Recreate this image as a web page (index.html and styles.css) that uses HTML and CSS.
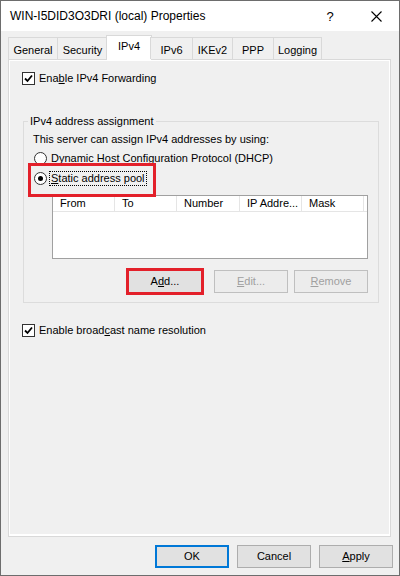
FILE: index.html
```html
<!DOCTYPE html>
<html>
<head>
<meta charset="utf-8">
<link rel="stylesheet" href="styles.css">
</head>
<body>
<div class="window">
  <div class="titlebar">
    <span class="title">WIN-I5DID3O3DRI (local) Properties</span>
    <span class="help">?</span>
    <span class="close"><svg width="11" height="11" viewBox="0 0 11 11"><path d="M0.5 0.5 L10.5 10.5 M10.5 0.5 L0.5 10.5" stroke="#000" stroke-width="1.1" fill="none"/></svg></span>
  </div>
  <div class="client">
    <div class="tabs">
      <div class="tab">General</div>
      <div class="tab">Security</div>
      <div class="tab selected">IPv4</div>
      <div class="tab">IPv6</div>
      <div class="tab">IKEv2</div>
      <div class="tab">PPP</div>
      <div class="tab">Logging</div>
    </div>
    <div class="panel">
      <div class="page">
        <div class="check first">
          <span class="box"><svg width="9" height="9" viewBox="0 0 9 9"><path d="M1 4.5 L3.5 7 L8 1.5" stroke="#000" stroke-width="1.8" fill="none"/></svg></span>
          <span>Ena<u>b</u>le IPv4 Forwarding</span>
        </div>
        <fieldset class="group">
          <legend>IPv4 address assignment</legend>
          <div class="intro">This server can assign IPv4 addresses by using:</div>
          <div class="radio dhcp">
            <span class="circle"></span>
            <span class="rlabel"><u>D</u>ynamic Host Configuration Protocol (DHCP)</span>
          </div>
          <div class="radio static">
            <span class="circle on"><span class="dot"></span></span>
            <span class="rlabel focus"><u>S</u>tatic address pool</span>
          </div>
          <div class="list">
            <div class="lhead">
              <span class="col">From</span>
              <span class="col">To</span>
              <span class="col">Number</span>
              <span class="col">IP Addre...</span>
              <span class="col">Mask</span>
            </div>
          </div>
          <div class="actions">
            <button class="btn add">A<u>d</u>d...</button>
            <button class="btn disabled"><u>E</u>dit...</button>
            <button class="btn disabled"><u>R</u>emove</button>
          </div>
        </fieldset>
        <div class="check second">
          <span class="box"><svg width="9" height="9" viewBox="0 0 9 9"><path d="M1 4.5 L3.5 7 L8 1.5" stroke="#000" stroke-width="1.8" fill="none"/></svg></span>
          <span>Enable broad<u>c</u>ast name resolution</span>
        </div>
      </div>
    </div>
    <div class="footer">
      <button class="btn default">OK</button>
      <button class="btn">Cancel</button>
      <button class="btn"><u>A</u>pply</button>
    </div>
  </div>
</div>
</body>
</html>
```
FILE: styles.css
```css
* { box-sizing: border-box; }
html, body { margin: 0; padding: 0; }
body {
  width: 400px;
  height: 576px;
  overflow: hidden;
  font-family: "Liberation Sans", Arial, sans-serif;
  font-size: 11px;
  line-height: 13px;
  color: #000;
  background: #f0f0f0;
}
u { text-decoration: underline; text-underline-offset: 1px; }

.window {
  width: 400px;
  height: 576px;
  border: 1px solid #6d6d6d;
  display: flex;
  flex-direction: column;
  background: #f0f0f0;
}

.titlebar {
  height: 30px;
  flex: none;
  background: #fff;
  display: flex;
  align-items: center;
  padding-left: 9px;
  position: relative;
}
.title {
  font-size: 12px;
  line-height: 16px;
  flex: 1;
}
.help {
  font-size: 13px;
  width: 46px;
  text-align: center;
  margin-right: 0;
}
.close {
  width: 46px;
  display: flex;
  justify-content: center;
  align-items: center;
  margin-right: 0;
}

.client {
  flex: 1;
  display: flex;
  flex-direction: column;
  padding: 4px 6px 7px 7px;
}

.tabs {
  height: 24px;
  display: flex;
  align-items: flex-end;
  position: relative;
  z-index: 2;
}
.tab {
  height: 22px;
  padding-top: 6px;
  text-align: center;
  background: #f0f0f0;
  border: 1px solid #d9d9d9;
  border-bottom: none;
  margin-left: -1px;
}
.tab:first-child { margin-left: 0; width: 50px; }
.tab:nth-child(2) { width: 51px; }
.tab:nth-child(3) { width: 45px; }
.tab:nth-child(4) { width: 43px; }
.tab:nth-child(5) { width: 41px; }
.tab:nth-child(6) { width: 42px; }
.tab:nth-child(7) { width: 49px; }
.tab.selected {
  height: 25px;
  margin-bottom: -1px;
  padding-top: 4px;
  background: #fff;
  margin-left: -2px;
  margin-right: -1px;
  width: 46px;
}

.panel {
  height: 478px;
  flex: none;
  margin-right: 2px;
  border: 1px solid #d9d9d9;
  background: #fff;
  padding: 1px 1px 2px 1px;
}
.page {
  height: 100%;
  background: #f0f0f0;
  padding: 11px 10px 0 12px;
}

.check {
  display: flex;
  align-items: center;
  gap: 4px;
  height: 13px;
}
.box {
  width: 13px;
  height: 13px;
  border: 1px solid #333;
  background: #fff;
  display: flex;
  align-items: center;
  justify-content: center;
}
.check.second { margin-top: 21px; }

.group {
  margin: 30px 0 0 1px;
  padding: 5px 10px 9px 9px;
  border: 1px solid #dcdcdc;
  min-width: 0;
}
.group legend {
  padding: 0 2px;
  margin-left: -5px;
  line-height: 13px;
}

.intro { height: 13px; }

.radio {
  display: flex;
  align-items: center;
  height: 15px;
  margin-top: 5px;
  position: relative;
}
.circle {
  width: 13px;
  height: 13px;
  border: 1px solid #333;
  border-radius: 50%;
  background: #fff;
  margin-left: 1px;
  margin-right: 2px;
  display: flex;
  align-items: center;
  justify-content: center;
}
.dot {
  width: 5px;
  height: 5px;
  border-radius: 50%;
  background: #000;
}
.rlabel {
  padding: 0 1px;
  border: 1px solid transparent;
  line-height: 13px;
}
.rlabel.focus { border: 1px dotted #000; }
.radio.static::after {
  content: "";
  position: absolute;
  left: -5px;
  top: -8px;
  width: 122px;
  height: 28px;
  border: 3px solid #e3202a;
}

.list {
  margin: 9px 0 0 19px;
  height: 64px;
  border: 1px solid #a0a0a0;
  background: #fff;
}
.lhead {
  display: flex;
  height: 16px;
  border-bottom: 1px solid #e5e5e5;
}
.col {
  width: 62px;
  padding-left: 7px;
  line-height: 15px;
  border-right: 1px solid #e5e5e5;
}
.col:nth-child(3) { width: 63px; }

.actions {
  display: flex;
  justify-content: flex-end;
  gap: 6px;
  margin-top: 11px;
}
.btn {
  width: 74px;
  height: 23px;
  font-family: inherit;
  font-size: 11px;
  line-height: 13px;
  color: #000;
  background: #e1e1e1;
  border: 1px solid #adadad;
  padding: 0;
  border-radius: 0;
}
.btn.add {
  margin-right: 6px;
  outline: 3px solid #e3202a;
  outline-offset: -1px;
}
.btn.disabled {
  color: #a0a0a0;
  background: #ececec;
  border-color: #bfbfbf;
}
.btn.default {
  border: 1px solid #0078d7;
  box-shadow: inset 0 0 0 1px #0078d7;
}

.footer {
  display: flex;
  justify-content: flex-end;
  gap: 8px;
  margin-top: 8px;
}
```
